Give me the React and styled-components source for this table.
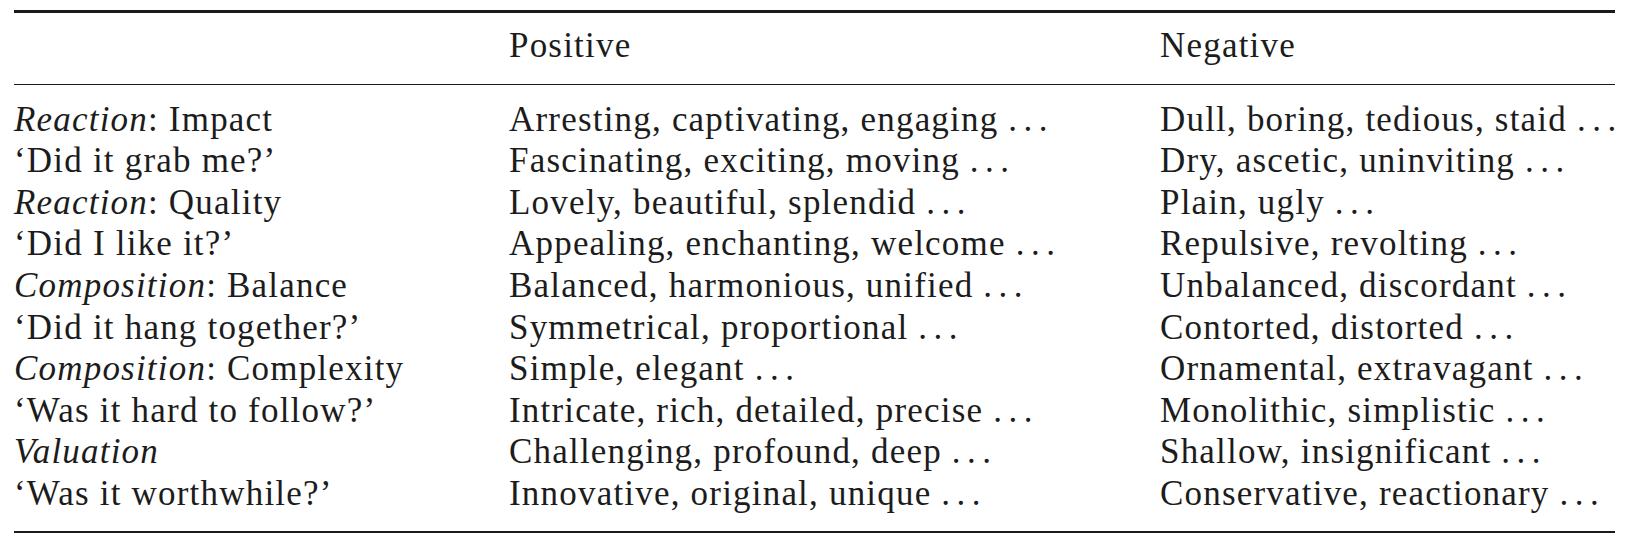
import React from 'react'
import styled, {createGlobalStyle} from 'styled-components'

const rows = [
  {label: 'Reaction', rest: ': Impact', pos: 'Arresting, captivating, engaging', neg: 'Dull, boring, tedious, staid'},
  {text: '‘Did it grab me?’', pos: 'Fascinating, exciting, moving', neg: 'Dry, ascetic, uninviting'},
  {label: 'Reaction', rest: ': Quality', pos: 'Lovely, beautiful, splendid', neg: 'Plain, ugly'},
  {text: '‘Did I like it?’', pos: 'Appealing, enchanting, welcome', neg: 'Repulsive, revolting'},
  {label: 'Composition', rest: ': Balance', pos: 'Balanced, harmonious, unified', neg: 'Unbalanced, discordant'},
  {text: '‘Did it hang together?’', pos: 'Symmetrical, proportional', neg: 'Contorted, distorted'},
  {label: 'Composition', rest: ': Complexity', pos: 'Simple, elegant', neg: 'Ornamental, extravagant'},
  {text: '‘Was it hard to follow?’', pos: 'Intricate, rich, detailed, precise', neg: 'Monolithic, simplistic'},
  {label: 'Valuation', rest: '', pos: 'Challenging, profound, deep', neg: 'Shallow, insignificant'},
  {text: '‘Was it worthwhile?’', pos: 'Innovative, original, unique', neg: 'Conservative, reactionary'},
]

const App = () => {
  return (
    <>
      <GlobalStyle />
      <Table>
        <HeadRow>
          <Cell />
          <Cell>Positive</Cell>
          <Cell>Negative</Cell>
        </HeadRow>
        <Body>
          {rows.map((r, i) => (
            <Row key={i}>
              <Cell>
                {r.label ? <><Em>{r.label}</Em>{r.rest}</> : r.text}
              </Cell>
              <Cell>{r.pos} <Dots>...</Dots></Cell>
              <Cell>{r.neg} <Dots>...</Dots></Cell>
            </Row>
          ))}
        </Body>
      </Table>
    </>
  )
}

export default App

const GlobalStyle = createGlobalStyle`
  body {
    margin: 0;
    background: #fff;
  }
`

const Table = styled.div`
  width: 1601px;
  margin: 10px 0 0 14px;
  border-top: 3px solid #1a1a1a;
  border-bottom: 3px solid #1a1a1a;
  font-family: "Liberation Serif", "Times New Roman", serif;
  font-size: 35px;
  line-height: 41.6px;
  letter-spacing: 1.2px;
  color: #1c1c1c;
`

const Grid = styled.div`
  display: grid;
  grid-template-columns: 495px 651px 1fr;
`

const HeadRow = styled(Grid)`
  padding: 12px 0 17px;
  border-bottom: 1.3px solid #1a1a1a;
`

const Body = styled.div`
  padding: 14px 0 16px;
`

const Row = styled(Grid)``

const Cell = styled.div`
  white-space: nowrap;
`

const Em = styled.i`
  font-style: italic;
`

const Dots = styled.span`
  letter-spacing: 6.5px;
`
